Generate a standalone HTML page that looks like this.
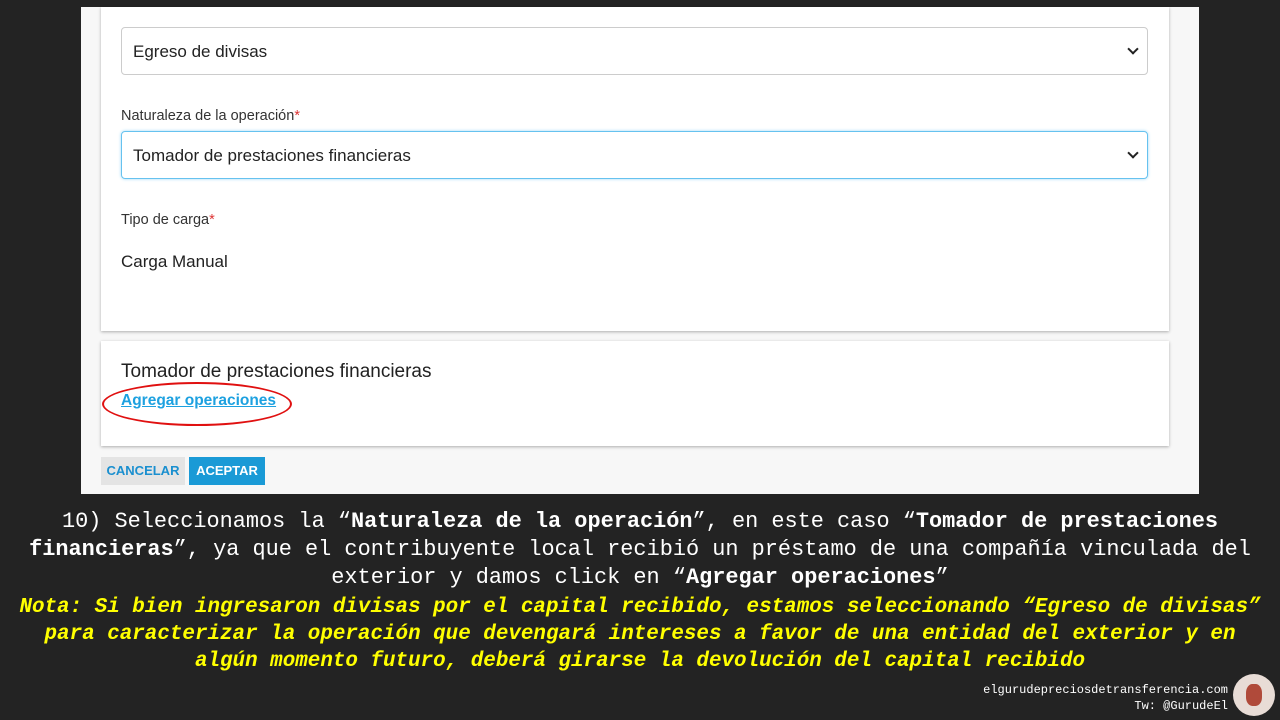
<!DOCTYPE html><html><head><meta charset="utf-8"><style>
body{margin:0;width:1280px;height:720px;background:#232323;overflow:hidden;font-family:"Liberation Sans",sans-serif;position:relative}
.shot{position:absolute;left:81px;top:7px;width:1118px;height:487px;background:#f7f7f7}
.card{position:absolute;left:20px;width:1068px;background:#fff;box-shadow:0 1px 3px rgba(0,0,0,.3)}
.sel{position:absolute;left:20px;width:1027px;height:48px;border:1px solid #ccc;border-radius:4px;font-size:17px;color:#222;box-sizing:border-box;padding:14px 11px}
.sel:after{content:"";position:absolute;right:10px;top:17px;width:6px;height:6px;border-right:2px solid #222;border-bottom:2px solid #222;transform:rotate(45deg)}
.lbl{position:absolute;left:20px;font-size:14.5px;color:#333}
.lbl b{color:#d33;font-weight:normal}
.cap{position:absolute;left:0;width:1280px;text-align:center;font-family:"Liberation Mono",monospace;font-size:21.9px;line-height:28px;color:#fff;white-space:nowrap}
.nota{color:#ffff00;font-style:italic;font-weight:bold;font-size:20.9px;line-height:27px}
</style></head><body>
<div class="shot">
<div class="card" style="top:0;height:324px">
<div class="sel" style="top:20px">Egreso de divisas</div>
<div class="lbl" style="top:101px">Naturaleza de la operación<b>*</b></div>
<div class="sel" style="top:124px;border-color:#66c2ef;box-shadow:0 0 3px #9fd8f5">Tomador de prestaciones financieras</div>
<div class="lbl" style="top:205px">Tipo de carga<b>*</b></div>
<div class="lbl" style="top:245px;font-size:17px;color:#222">Carga Manual</div>
</div>
<div class="card" style="top:334px;height:105px">
<div class="lbl" style="top:20px;font-size:19px;color:#222">Tomador de prestaciones financieras</div>
<div class="lbl" style="top:51px;font-size:15.5px;color:#1da1e0;text-decoration:underline;font-weight:bold">Agregar operaciones</div>
</div>
<div style="position:absolute;left:20px;top:450px;width:84px;height:28px;background:#e4e4e4;color:#1a8fcf;font-size:13px;font-weight:bold;text-align:center;line-height:28px">CANCELAR</div>
<div style="position:absolute;left:108px;top:450px;width:76px;height:28px;background:#1a9ad6;color:#fff;font-size:13px;font-weight:bold;text-align:center;line-height:28px">ACEPTAR</div>
</div>
<div style="position:absolute;left:102px;top:382px;width:186px;height:40px;border:2.5px solid #e01010;border-radius:50%"></div>
<div class="cap" style="top:508px">10) Seleccionamos la “<b>Naturaleza de la operación</b>”, en este caso “<b>Tomador de prestaciones<br>financieras</b>”, ya que el contribuyente local recibió un préstamo de una compañía vinculada del<br>exterior y damos click en “<b>Agregar operaciones</b>”</div>
<div class="cap nota" style="top:594px">Nota: Si bien ingresaron divisas por el capital recibido, estamos seleccionando “Egreso de divisas”<br>para caracterizar la operación que devengará intereses a favor de una entidad del exterior y en<br>algún momento futuro, deberá girarse la devolución del capital recibido</div>
<div style="position:absolute;right:52px;top:682px;text-align:right;font-family:'Liberation Mono',monospace;font-size:12px;line-height:16px;color:#fff">elgurudepreciosdetransferencia.com<br>Tw: @GurudeEl</div>
<div style="position:absolute;left:1233px;top:674px;width:42px;height:42px;border-radius:50%;background:#e8dcd6"><div style="position:absolute;left:13px;top:10px;width:16px;height:22px;border-radius:40%;background:#b04a3a"></div></div>
</body></html>
